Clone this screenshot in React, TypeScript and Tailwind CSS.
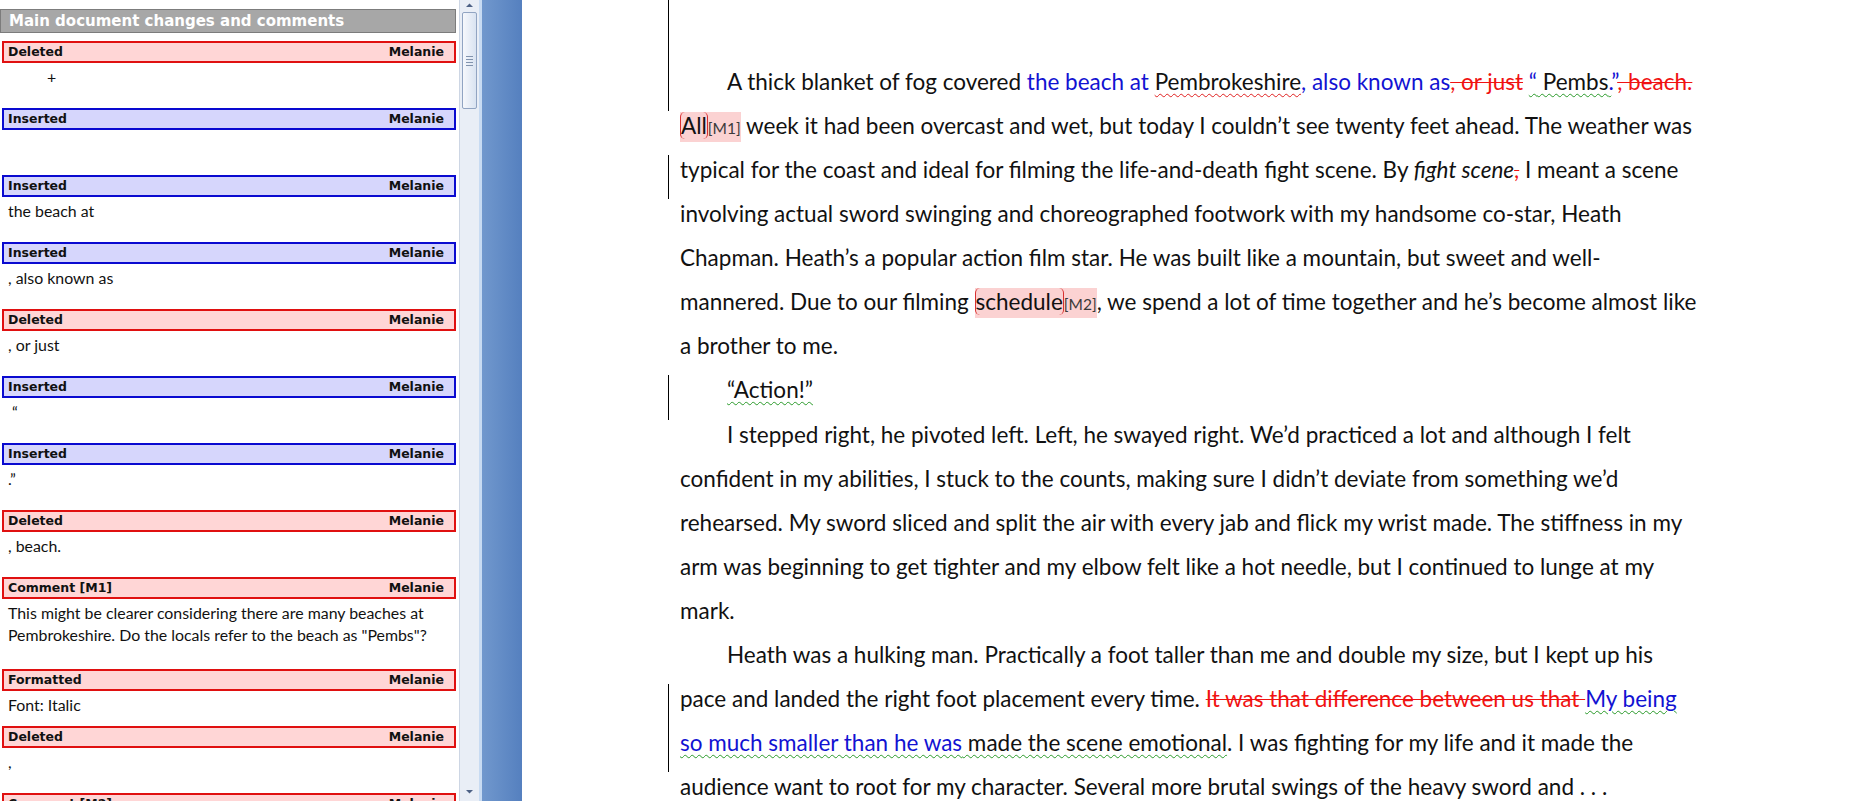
import React from 'react';

type Kind = 'del' | 'ins';

interface Entry {
  label: string;
  kind: Kind;
  body?: React.ReactNode;
  h: number;
}

const entries: Entry[] = [
  { label: 'Deleted', kind: 'del', body: <span className="pl-[39px]">+</span>, h: 45 },
  { label: 'Inserted', kind: 'ins', h: 45 },
  { label: 'Inserted', kind: 'ins', body: 'the beach at', h: 45 },
  { label: 'Inserted', kind: 'ins', body: ', also known as', h: 45 },
  { label: 'Deleted', kind: 'del', body: ', or just', h: 45 },
  { label: 'Inserted', kind: 'ins', body: '\u00a0\u201c', h: 45 },
  { label: 'Inserted', kind: 'ins', body: '.\u201d', h: 45 },
  { label: 'Deleted', kind: 'del', body: ', beach.', h: 45 },
  {
    label: 'Comment [M1]',
    kind: 'del',
    body: (
      <>
        This might be clearer considering there are many beaches at
        <br />
        Pembrokeshire. Do the locals refer to the beach as "Pembs"?
      </>
    ),
    h: 70,
  },
  { label: 'Formatted', kind: 'del', body: 'Font: Italic', h: 35 },
  { label: 'Deleted', kind: 'del', body: ',', h: 45 },
  { label: 'Comment [M2]', kind: 'del', h: 45 },
];

function ChangeEntry({ entry }: { entry: Entry }) {
  const box =
    entry.kind === 'del'
      ? 'border-[#e01010] bg-[#ffd6d6]'
      : 'border-[#0a0ad0] bg-[#d6d6fc]';
  return (
    <div>
      <div
        className={`h-[22px] border-2 ${box} flex items-center justify-between pl-[4px] pr-[10px] font-['DejaVu_Sans'] text-[12.5px] font-bold text-[#111] leading-none`}
      >
        <span>{entry.label}</span>
        <span>Melanie</span>
      </div>
      <div
        className="pl-[6px] pt-[3px] font-[Lato] text-[15.9px] leading-[22px] text-[#111]"
        style={{ height: entry.h }}
      >
        {entry.body}
      </div>
    </div>
  );
}

function Scrollbar() {
  return (
    <div className="w-[20px] h-full bg-[#e9eef6] border-l border-[#cdd6e4] flex flex-col items-center">
      <svg width="9" height="10" viewBox="0 0 9 10" className="mt-[1px]">
        <path d="M1 6 L4.5 2.5 L8 6 Z" fill="#4d6185" />
      </svg>
      <div className="mt-[1px] h-[97px] w-[15px] rounded-[2px] border border-[#91a4c2] bg-gradient-to-r from-[#f6f8fc] to-[#d9e3f1] flex flex-col items-center justify-center gap-[2px]">
        <div className="h-px w-[7px] bg-[#8193ad]" />
        <div className="h-px w-[7px] bg-[#8193ad]" />
        <div className="h-px w-[7px] bg-[#8193ad]" />
        <div className="h-px w-[7px] bg-[#8193ad]" />
      </div>
      <div className="flex-1" />
      <svg width="9" height="10" viewBox="0 0 9 10" className="mb-[4px]">
        <path d="M1 3 L4.5 6.5 L8 3 Z" fill="#4d6185" />
      </svg>
    </div>
  );
}

function Ins({ children }: { children: React.ReactNode }) {
  return <span className="text-[#1212d2]">{children}</span>;
}

function Del({ children }: { children: React.ReactNode }) {
  return (
    <span className="text-[#f01212] line-through decoration-[#f01212] decoration-1">{children}</span>
  );
}

function Green({ children }: { children: React.ReactNode }) {
  return (
    <span className="underline decoration-wavy decoration-[#2a9a2a] decoration-1 underline-offset-[3px]">
      {children}
    </span>
  );
}

function Spell({ children }: { children: React.ReactNode }) {
  return (
    <span className="underline decoration-wavy decoration-[#e02020] decoration-1 underline-offset-[3px]">
      {children}
    </span>
  );
}

function Cmt({ text, id }: { text: string; id: string }) {
  return (
    <span className="inline-block bg-[#fbd2d2] leading-[27px]">
      <span className="relative inline-block px-[1px]">
        <span className="absolute left-0 top-0 h-full w-[5px] rounded-l-full border-l border-[#d83030]" />
        {text}
        <span className="absolute right-0 top-0 h-full w-[5px] rounded-r-full border-r border-[#d83030]" />
      </span>
      <span className="text-[15.5px] text-[#3a3a3a]">[{id}]</span>
    </span>
  );
}

function Line({
  children,
  indent,
  bar,
}: {
  children?: React.ReactNode;
  indent?: boolean;
  bar?: boolean;
}) {
  return (
    <div className={`relative h-[44.1px] leading-[44.1px] whitespace-nowrap ${indent ? 'pl-[47px]' : ''}`}>
      {bar && <span className="absolute left-[-12px] top-[7px] h-full w-px bg-black" />}
      {children}
    </div>
  );
}

export default function App() {
  return (
    <div className="flex h-[801px] w-[1860px] overflow-hidden bg-white">
      <div className="w-[459px] shrink-0 pt-[9px] pr-[3px]">
        <div className="mb-[8px] flex h-[24px] items-center border border-[#7c7c7c] bg-[#a7a7a7] pl-[8px] font-['DejaVu_Sans'] text-[15px] font-bold text-white">
          Main document changes and comments
        </div>
        <div className="pl-[2px]">
          {entries.map((e, i) => (
            <ChangeEntry key={i} entry={e} />
          ))}
        </div>
      </div>

      <Scrollbar />
      <div className="w-[3px] shrink-0 bg-[#c8dbf2]" />
      <div className="w-[40px] shrink-0 bg-gradient-to-r from-[#7198cd] to-[#5580bf]" />

      <div className="flex-1 pl-[158px] font-[Lato] text-[22.5px] text-[#111]">
        <div className="relative h-[59.8px]">
          <span className="absolute left-[-12px] top-0 h-[66.8px] w-px bg-black" />
        </div>
        <Line indent bar>
          A thick blanket of fog covered <Ins>the beach at</Ins> <Spell>Pembrokeshire</Spell>
          <Ins>, also known as</Ins>
          <Del>, or just</Del>{' '}
          <Green>
            <Ins>{'\u201c'}</Ins> Pembs<Ins>.</Ins>
          </Green>
          <Ins>{'\u201d'}</Ins>
          <Del>, beach.</Del>
        </Line>
        <Line>
          <Cmt text="All" id="M1" /> week it had been overcast and wet, but today I couldn’t see twenty feet ahead. The
          weather was
        </Line>
        <Line bar>
          typical for the coast and ideal for filming the life-and-death fight scene. By <i>fight scene</i>
          <Del>,</Del> I meant a scene
        </Line>
        <Line>involving actual sword swinging and choreographed footwork with my handsome co-star, Heath</Line>
        <Line>Chapman. Heath’s a popular action film star. He was built like a mountain, but sweet and well-</Line>
        <Line>
          mannered. Due to our filming <Cmt text="schedule" id="M2" />, we spend a lot of time together and he’s become
          almost like
        </Line>
        <Line>a brother to me.</Line>
        <Line indent bar>
          <Green>“Action!”</Green>
        </Line>
        <Line indent>I stepped right, he pivoted left. Left, he swayed right. We’d practiced a lot and although I felt</Line>
        <Line>confident in my abilities, I stuck to the counts, making sure I didn’t deviate from something we’d</Line>
        <Line>rehearsed. My sword sliced and split the air with every jab and flick my wrist made. The stiffness in my</Line>
        <Line>arm was beginning to get tighter and my elbow felt like a hot needle, but I continued to lunge at my</Line>
        <Line>mark.</Line>
        <Line indent>Heath was a hulking man. Practically a foot taller than me and double my size, but I kept up his</Line>
        <Line bar>
          pace and landed the right foot placement every time. <Del>It was that difference between us that </Del>
          <Green>
            <Ins>My being</Ins>
          </Green>
        </Line>
        <Line bar>
          <Green>
            <Ins>so much smaller than he was</Ins> made the scene emotional
          </Green>
          . I was fighting for my life and it made the
        </Line>
        <Line>audience want to root for my character. Several more brutal swings of the heavy sword and . . .</Line>
      </div>
    </div>
  );
}
